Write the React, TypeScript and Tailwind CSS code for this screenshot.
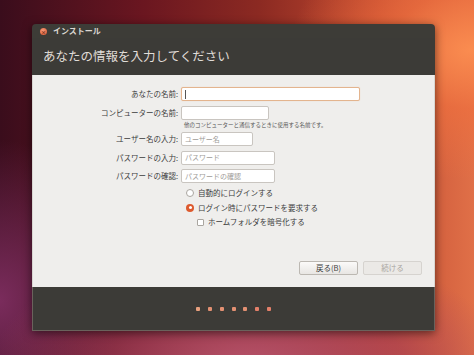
const jp = "font-['Noto_Sans_CJK_JP','Noto_Sans',sans-serif]";

function Field({ label, width, placeholder, focused }: { label: string; width: string; placeholder?: string; focused?: boolean }) {
  return (
    <div className="flex items-center h-[14px]">
      <div className="w-[148px] pr-[3px] text-right text-[7.5px] text-[#3c3c3c] leading-none">{label}</div>
      <div
        className={`${width} h-[14px] rounded-[2px] bg-white border flex items-center px-[3px] text-[7px] text-[#a09c98] leading-none ${
          focused ? "border-[#e3b48e] shadow-[0_0_1px_#f0c8a8]" : "border-[#c9c5c0]"
        }`}
      >
        {focused && <span className="w-px h-[9px] bg-[#555]" />}
        {placeholder}
      </div>
    </div>
  );
}

export default function App() {
  return (
    <div
      className={`${jp} w-[474px] h-[355px] overflow-hidden bg-[radial-gradient(ellipse_180px_130px_at_470px_50px,#fa8c50_0%,rgba(240,112,62,0.65)_45%,transparent_100%),radial-gradient(ellipse_260px_130px_at_250px_370px,#b8546c_0%,rgba(165,64,94,0.55)_60%,transparent_100%),radial-gradient(ellipse_120px_160px_at_0px_300px,#7a2c5c_0%,transparent_100%),linear-gradient(90deg,#3a0d1c_0%,#6a1620_30%,#8c2a22_55%,#c24a30_80%,#e07048_100%)] pt-[24px] pl-[32px]`}
    >
      <div className="w-[403px] rounded-t-[4px] overflow-hidden shadow-[0_2px_10px_rgba(0,0,0,0.55)] flex flex-col">
        {/* title bar */}
        <div className="h-[14px] bg-[#3d3c37] flex items-center pl-[8px] gap-[6px]">
          <div className="w-[7px] h-[7px] rounded-full bg-[radial-gradient(circle_at_40%_35%,#f59a78,#d9532c)] flex items-center justify-center">
            <span className="text-[5px] leading-none text-[#6b2a18] font-bold">×</span>
          </div>
          <span className="text-[8px] font-bold text-[#dcd8d2] leading-none">インストール</span>
        </div>
        {/* header */}
        <div className="h-[37px] bg-[#3c3b37] flex items-center pl-[11px]">
          <span className="text-[12.5px] text-[#e0ddd8] leading-none">あなたの情報を入力してください</span>
        </div>
        {/* body */}
        <div className="h-[212px] bg-[#efeeec] flex flex-col pt-[12px] pb-[12px] pr-[12px] border-x border-[#d8d6d2]">
          <div className="flex flex-col gap-[4.5px]">
            <Field label="あなたの名前:" width="w-[179px]" focused />
            <Field label="コンピューターの名前:" width="w-[88px]" />
            <div className="h-[3.5px] flex items-center pl-[151px] text-[5.5px] text-[#555] leading-none whitespace-nowrap">
              他のコンピューターと通信するときに使用する名前です。
            </div>
            <Field label="ユーザー名の入力:" width="w-[72px]" placeholder="ユーザー名" />
            <Field label="パスワードの入力:" width="w-[94px]" placeholder="パスワード" />
            <Field label="パスワードの確認:" width="w-[94px]" placeholder="パスワードの確認" />
          </div>
          <div className="pl-[153px] mt-[6px] flex flex-col gap-[6.5px] text-[7.5px] text-[#3c3c3c] leading-none">
            <div className="flex items-center gap-[4px] h-[8px]">
              <span className="w-[8px] h-[8px] rounded-full border border-[#aaa6a0] bg-white" />
              自動的にログインする
            </div>
            <div className="flex items-center gap-[4px] h-[8px]">
              <span className="w-[8px] h-[8px] rounded-full bg-[#dd5a2e] flex items-center justify-center">
                <span className="w-[3px] h-[3px] rounded-full bg-white" />
              </span>
              ログイン時にパスワードを要求する
            </div>
            <div className="flex items-center gap-[4px] pl-[11px] h-[8px]">
              <span className="w-[7px] h-[7px] rounded-[1px] border border-[#aaa6a0] bg-white" />
              ホームフォルダを暗号化する
            </div>
          </div>
          <div className="mt-auto flex justify-end gap-[5px]">
            <div className="w-[59px] h-[14px] rounded-[2px] border border-[#bcb8b2] bg-[linear-gradient(#fbfaf9,#e8e6e3)] flex items-center justify-center text-[7.5px] text-[#3c3c3c] leading-none">
              戻る(B)
            </div>
            <div className="w-[59px] h-[14px] rounded-[2px] border border-[#d6d3cf] bg-[#ebe9e6] flex items-center justify-center text-[7.5px] text-[#aaa6a2] leading-none">
              続ける
            </div>
          </div>
        </div>
        {/* footer */}
        <div className="h-[44px] bg-[#3c3b37] border-x border-b border-[#6a625c] flex items-center justify-center gap-[7.8px]">
          {["#e8a07e", "#e39072", "#e39072", "#e39072", "#e39072", "#e4806a", "#e4806a"].map((c, i) => (
            <span key={i} className="w-[4px] h-[4px] rounded-[1px]" style={{ backgroundColor: c }} />
          ))}
        </div>
      </div>
    </div>
  );
}
